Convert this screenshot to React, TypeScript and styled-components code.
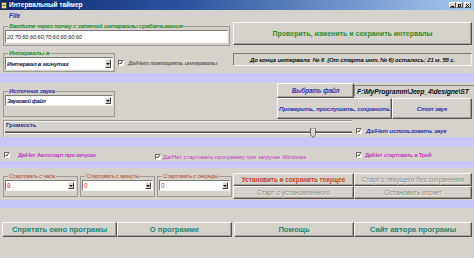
import React from 'react';
import styled, { createGlobalStyle } from 'styled-components';

const GlobalStyle = createGlobalStyle`
  html, body {
    margin: 0;
    padding: 0;
    background: #d5d2cb;
  }
  body {
    font-family: "Liberation Sans", Arial, sans-serif;
  }
`;

const FONT = '"Liberation Sans", Arial, sans-serif';

type TextProps = {
  $color: string;
  $size?: number;
  $bold?: boolean;
  $italic?: boolean;
  $ls?: number;
};

const textStyle = (p: TextProps) => `
  color: ${p.$color};
  font-size: ${p.$size ?? 7}px;
  font-weight: ${p.$bold ? 700 : 400};
  font-style: ${p.$italic ? 'italic' : 'normal'};
  letter-spacing: ${p.$ls ?? 0}px;
`;

const Window = styled.div`
  width: 474px;
  height: 258px;
  background: #d5d2cb;
  display: flex;
  flex-direction: column;
  overflow: hidden;
  font-family: ${FONT};
`;

const TitleBar = styled.div`
  height: 10px;
  flex: none;
  display: flex;
  align-items: center;
  padding: 0 3px 0 1px;
  background: linear-gradient(to right, #0b2670 0%, #2f55a0 40%, #a8c9ee 100%);
`;

const TitleText = styled.span`
  margin-left: 2px;
  color: #ffffff;
  font-size: 6.5px;
  font-weight: 700;
  line-height: 10px;
  flex: 1;
`;

const CaptionButtons = styled.div`
  display: flex;
`;

const CaptionButton = styled.div<{ $gap?: number }>`
  width: 7px;
  height: 6px;
  margin-left: ${p => p.$gap ?? 0}px;
  box-sizing: border-box;
  background: #d5d2cb;
  border: 1px solid;
  border-color: #ffffff #555 #555 #ffffff;
  display: flex;
  align-items: center;
  justify-content: center;
`;

const MenuBar = styled.div`
  height: 11px;
  flex: none;
  display: flex;
  align-items: center;
  padding-left: 9px;
`;

const MenuItem = styled.span`
  color: #3a2c9c;
  font-size: 6.5px;
  font-weight: 700;
  font-style: italic;
`;

const Row = styled.div<{ $h: number }>`
  height: ${p => p.$h}px;
  flex: none;
  display: flex;
  align-items: flex-start;
`;

const Band = styled.div<{ $h: number }>`
  height: ${p => p.$h}px;
  flex: none;
  background: #c7c7f9;
`;

const LeftCol = styled.div<{ $top?: number }>`
  width: 233px;
  flex: none;
  box-sizing: border-box;
  padding-left: 3px;
  padding-top: ${p => p.$top ?? 0}px;
  display: flex;
  align-items: flex-start;
`;

const RightCol = styled.div<{ $top?: number }>`
  width: 239px;
  flex: none;
  padding-top: ${p => p.$top ?? 0}px;
  display: flex;
  flex-direction: column;
`;

const Group = styled.fieldset<{ $w: number; $h: number; $ml?: number }>`
  box-sizing: border-box;
  width: ${p => p.$w}px;
  height: ${p => p.$h}px;
  margin: 0 0 0 ${p => p.$ml ?? 0}px;
  padding: 0 1px;
  min-width: 0;
  border: 1px solid #9d9a93;
  display: flex;
  flex-direction: column;
`;

const Legend = styled.legend<TextProps>`
  padding: 0 1px;
  margin-left: 3px;
  line-height: 8px;
  white-space: nowrap;
  ${p => textStyle(p)}
`;

const TextInput = styled.div<TextProps & { $h: number }>`
  height: ${p => p.$h}px;
  box-sizing: border-box;
  background: #ffffff;
  border: 1px solid;
  border-color: #7e7b75 #f4f2ee #f4f2ee #7e7b75;
  display: flex;
  align-items: center;
  padding-left: 1px;
  white-space: nowrap;
  overflow: hidden;
  ${p => textStyle(p)}
`;

const Combo = styled.div<{ $h: number }>`
  height: ${p => p.$h}px;
  box-sizing: border-box;
  background: #ffffff;
  border: 1px solid;
  border-color: #7e7b75 #f4f2ee #f4f2ee #7e7b75;
  display: flex;
  align-items: stretch;
`;

const ComboText = styled.span<TextProps>`
  flex: 1;
  display: flex;
  align-items: center;
  padding-left: 1px;
  white-space: nowrap;
  overflow: hidden;
  ${p => textStyle(p)}
`;

const ComboArrow = styled.div`
  width: 6px;
  margin: 1px;
  box-sizing: border-box;
  background: #d5d2cb;
  border: 1px solid;
  border-color: #f4f2ee #4a4844 #4a4844 #f4f2ee;
  display: flex;
  align-items: center;
  justify-content: center;

  &::after {
    content: '';
    border-left: 2px solid transparent;
    border-right: 2px solid transparent;
    border-top: 2px solid #111;
  }
`;

const Button = styled.div<TextProps & { $w: number; $h: number; $disabled?: boolean }>`
  width: ${p => p.$w}px;
  height: ${p => p.$h}px;
  flex: none;
  box-sizing: border-box;
  background: #d5d2cb;
  border: 1px solid;
  border-color: #f7f5f1 #55534f #55534f #f7f5f1;
  box-shadow: inset -1px -1px 0 #a09d96;
  display: flex;
  align-items: center;
  justify-content: center;
  white-space: nowrap;
  ${p => textStyle(p)}
  ${p => (p.$disabled ? 'text-shadow: 0.5px 0.5px 0 #f4f2ee;' : '')}
`;

const ButtonRow = styled.div`
  display: flex;
`;

const StatusPanel = styled.div`
  height: 13px;
  width: 239px;
  box-sizing: border-box;
  border: 1px solid;
  border-color: #7e7b75 #f4f2ee #f4f2ee #7e7b75;
  display: flex;
  align-items: center;
  justify-content: center;
  color: #111;
  font-size: 6px;
  letter-spacing: -0.15px;
  font-weight: 700;
  font-style: italic;
  white-space: nowrap;
`;

const CheckItem = styled.div<{ $w?: number; $mt?: number; $ml?: number }>`
  ${p => (p.$w ? `width: ${p.$w}px;` : '')}
  flex: none;
  margin-top: ${p => p.$mt ?? 0}px;
  margin-left: ${p => p.$ml ?? 0}px;
  display: flex;
  align-items: center;
`;

const CheckBox = styled.div`
  width: 6px;
  height: 6px;
  flex: none;
  box-sizing: border-box;
  background: #ffffff;
  border: 1px solid;
  border-color: #6e6b66 #f4f2ee #f4f2ee #6e6b66;
  display: flex;
  align-items: center;
  justify-content: center;
`;

const CheckLabel = styled.span<TextProps & { $gap: number }>`
  margin-left: ${p => p.$gap}px;
  white-space: nowrap;
  line-height: 8px;
  ${p => textStyle(p)}
`;

const SoundControls = styled.div`
  margin-left: auto;
  width: 197px;
  padding-top: 1px;
  display: flex;
  flex-direction: column;
`;

const PathBox = styled.div`
  width: 120px;
  height: 11px;
  margin-top: 2px;
  box-sizing: border-box;
  border-top: 1px solid #8a8781;
  border-left: 1px solid #8a8781;
  display: flex;
  align-items: center;
  padding-left: 2px;
  color: #111;
  font-size: 6.8px;
  letter-spacing: -0.1px;
  font-weight: 700;
  font-style: italic;
  white-space: nowrap;
  overflow: hidden;
`;

const VolumePanel = styled.div`
  width: 349px;
  height: 17px;
  margin-left: 3px;
  box-sizing: border-box;
  border-top: 1px solid #9d9a93;
  border-left: 1px solid #9d9a93;
  box-shadow: inset 1px 1px 0 #f4f2ee;
  display: flex;
  flex-direction: column;
`;

const VolumeLabel = styled.span`
  margin: 1px 0 0 2px;
  color: #2c2c92;
  font-size: 6px;
  letter-spacing: -0.1px;
  font-weight: 700;
  line-height: 6px;
`;

const SliderArea = styled.div`
  position: relative;
  height: 10px;
`;

const SliderTrack = styled.div`
  position: absolute;
  left: 1px;
  right: 0;
  top: 3px;
  height: 1px;
  border-top: 1px solid #8a8781;
  border-bottom: 1px solid #fbfaf7;
  background: #55534f;
`;

const SliderThumb = styled.svg`
  position: absolute;
  top: 0;
`;

const BottomSpacer = styled.div<{ $h: number }>`
  height: ${p => p.$h}px;
  flex: none;
`;

const StartGrid = styled.div`
  display: grid;
  grid-template-columns: 121px 118px;
  grid-template-rows: 13px 13px;
  margin-top: 5px;
`;

const Check = () => (
  <svg width="4" height="4" viewBox="0 0 4 4">
    <polyline points="0.4,1.8 1.5,3 3.6,0.5" fill="none" stroke="#111" strokeWidth="1" />
  </svg>
);

const ComboBox: React.FC<{ text: string; h: number } & TextProps> = ({ text, h, ...t }) => (
  <Combo $h={h}>
    <ComboText {...t}>{text}</ComboText>
    <ComboArrow />
  </Combo>
);

const CheckOption: React.FC<{ label: string; w?: number; mt?: number; ml?: number; gap: number } & TextProps> = ({
  label,
  w,
  mt,
  ml,
  gap,
  ...t
}) => (
  <CheckItem $w={w} $mt={mt} $ml={ml}>
    <CheckBox>
      <Check />
    </CheckBox>
    <CheckLabel $gap={gap} {...t}>
      {label}
    </CheckLabel>
  </CheckItem>
);

const GREEN = '#2f8d2f';
const BLUE = '#3434ad';
const MAGENTA = '#c33ec3';
const BROWN = '#b0482c';
const TEAL = '#1f8677';
const GREY = '#8d8a85';

const starts = [
  { label: 'Стартовать с часа', value: '8' },
  { label: 'Стартовать с минуты', value: '0' },
  { label: 'Стартовать с секунды', value: '0' },
];

const volume = 0.885;

export default function App() {
  return (
    <>
      <GlobalStyle />
      <Window>
        <TitleBar>
          <svg width="6" height="7" viewBox="0 0 6 7">
            <rect x="0.5" y="0.5" width="5" height="6" fill="#e8d890" stroke="#5a4a20" strokeWidth="0.8" />
            <line x1="1.5" y1="3.5" x2="4.5" y2="3.5" stroke="#5a4a20" strokeWidth="0.8" />
          </svg>
          <TitleText>Интервальный таймер</TitleText>
          <CaptionButtons>
            <CaptionButton>
              <svg width="3" height="3" viewBox="0 0 3 3">
                <line x1="0" y1="2.5" x2="3" y2="2.5" stroke="#000" strokeWidth="1" />
              </svg>
            </CaptionButton>
            <CaptionButton>
              <svg width="3" height="3" viewBox="0 0 3 3">
                <rect x="0.5" y="0.5" width="2" height="2" fill="none" stroke="#000" strokeWidth="0.8" />
              </svg>
            </CaptionButton>
            <CaptionButton $gap={1}>
              <svg width="3" height="3" viewBox="0 0 3 3">
                <path d="M0 0 L3 3 M3 0 L0 3" stroke="#000" strokeWidth="0.8" />
              </svg>
            </CaptionButton>
          </CaptionButtons>
        </TitleBar>

        <MenuBar>
          <MenuItem>File</MenuItem>
        </MenuBar>

        <Row $h={26}>
          <LeftCol $top={1}>
            <Group $w={227} $h={24}>
              <Legend $color={GREEN} $bold $italic $size={6.2} $ls={-0.3}>
                Вводите через точку с запятой интервалы срабатывания
              </Legend>
              <TextInput $h={13} $color="#1a1a1a" $size={5.5} $italic>
                20;70;60;60;60;70;60;60;60;60
              </TextInput>
            </Group>
          </LeftCol>
          <RightCol $top={1}>
            <Button $w={239} $h={23} $color={GREEN} $bold $size={7}>
              Проверить, изменить и сохранить интервалы
            </Button>
          </RightCol>
        </Row>

        <Row $h={26}>
          <LeftCol $top={2}>
            <Group $w={112} $h={23}>
              <Legend $color={GREEN} $bold $italic $size={6.2} $ls={-0.2}>
                Интервалы в
              </Legend>
              <ComboBox text="Интервал в минутах" h={13} $color="#1c1c4e" $size={6.2} $ls={-0.3} $bold $italic />
            </Group>
            <CheckOption
              label="Да/Нет повторять интервалы"
              ml={3}
              mt={10}
              gap={4}
              $color="#6a6a6a"
              $size={6}
              $ls={-0.3}
              $bold
              $italic
            />
          </LeftCol>
          <RightCol $top={6}>
            <StatusPanel>До конца интервала &nbsp;№ 6 &nbsp;(От старта инт. № 6) осталось: 21 м. 58 с.</StatusPanel>
          </RightCol>
        </Row>

        <Band $h={9} />

        <Row $h={38}>
          <LeftCol $top={5}>
            <Group $w={112} $h={30}>
              <Legend $color={BLUE} $bold $italic $size={6.2} $ls={-0.25}>
                Источник звука
              </Legend>
              <ComboBox text="Звуковой файл" h={11} $color="#1c1c5e" $size={5.8} $ls={-0.45} $bold $italic />
            </Group>
          </LeftCol>
          <SoundControls>
            <ButtonRow>
              <Button $w={77} $h={15} $color={BLUE} $bold $italic $size={6.4} $ls={-0.2}>
                Выбрать файл
              </Button>
              <PathBox>F:\MyProgramm\Jeep_4\designe\ST</PathBox>
            </ButtonRow>
            <ButtonRow>
              <Button $w={115} $h={21} $color={BLUE} $bold $italic $size={6.2} $ls={-0.2}>
                Проверить, прослушать, сохранить
              </Button>
              <Button $w={80} $h={21} $color={BLUE} $bold $italic $size={6.2} $ls={-0.2}>
                Стоп звук
              </Button>
            </ButtonRow>
          </SoundControls>
        </Row>

        <Row $h={17}>
          <VolumePanel>
            <VolumeLabel>Громкость</VolumeLabel>
            <SliderArea>
              <SliderTrack />
              <SliderThumb
                width="6"
                height="10"
                viewBox="0 0 6 10"
                style={{ left: `${Math.round(volume * 349) - 3}px` }}
              >
                <path d="M0.5 0.5 H5.5 V6.5 L3 9.5 L0.5 6.5 Z" fill="#d5d2cb" stroke="#55534f" strokeWidth="0.8" />
                <path d="M1 1 H5" stroke="#ffffff" strokeWidth="0.8" />
              </SliderThumb>
            </SliderArea>
          </VolumePanel>
          <CheckOption
            label="Да/Нет использовать звук"
            ml={4}
            mt={7}
            gap={4}
            $color={BLUE}
            $size={6.2}
            $ls={-0.2}
            $bold
            $italic
          />
        </Row>

        <Band $h={10} />

        <Row $h={14}>
          <CheckOption
            label="Да/Нет Автостарт при запуске"
            w={151}
            ml={4}
            mt={4}
            gap={8}
            $color={MAGENTA}
            $size={5.8}
            $ls={-0.3}
            $bold
          />
          <CheckOption
            label="Да/Нет стартовать программу при загрузке Windows"
            w={201}
            mt={6}
            gap={2}
            $color={MAGENTA}
            $size={5.9}
          />
          <CheckOption label="Да/Нет стартовать в Трей" mt={4} gap={3} $color={MAGENTA} $size={5.8} $ls={-0.3} $bold />
        </Row>

        <Band $h={7} />

        <Row $h={32}>
          <LeftCol $top={4}>
            {starts.map((s, i) => (
              <Group key={s.label} $w={75} $h={25} $ml={i === 0 ? 0 : 2}>
                <Legend $color={BROWN} $size={5.8} $ls={-0.2}>
                  {s.label}
                </Legend>
                <ComboBox text={s.value} h={11} $color="#c2321e" $size={6.4} />
              </Group>
            ))}
          </LeftCol>
          <StartGrid>
            <Button $w={121} $h={13} $color="#c73d1c" $bold $size={6.3}>
              Установить и сохранить текущее
            </Button>
            <Button $w={118} $h={13} $color={GREY} $size={6.6} $disabled>
              Старт с текущего без сохранения
            </Button>
            <Button $w={121} $h={13} $color={GREY} $size={6.6} $disabled>
              Старт с установленного
            </Button>
            <Button $w={118} $h={13} $color={GREY} $size={6.6} $disabled>
              Остановить отсчет
            </Button>
          </StartGrid>
        </Row>

        <Band $h={8} />
        <BottomSpacer $h={14} />

        <Row $h={15}>
          <LeftCol>
            <Button $w={115} $h={15} $color={TEAL} $bold $size={7.6} style={{ marginLeft: -1 }}>
              Спрятать окно програмы
            </Button>
            <Button $w={115} $h={15} $color={TEAL} $bold $size={7.6}>
              О программе
            </Button>
          </LeftCol>
          <Button $w={120} $h={15} $color={TEAL} $bold $size={7.6} style={{ marginLeft: 1 }}>
            Помощь
          </Button>
          <Button $w={118} $h={15} $color={TEAL} $bold $size={7.6}>
            Сайт автора програмы
          </Button>
        </Row>
      </Window>
    </>
  );
}
